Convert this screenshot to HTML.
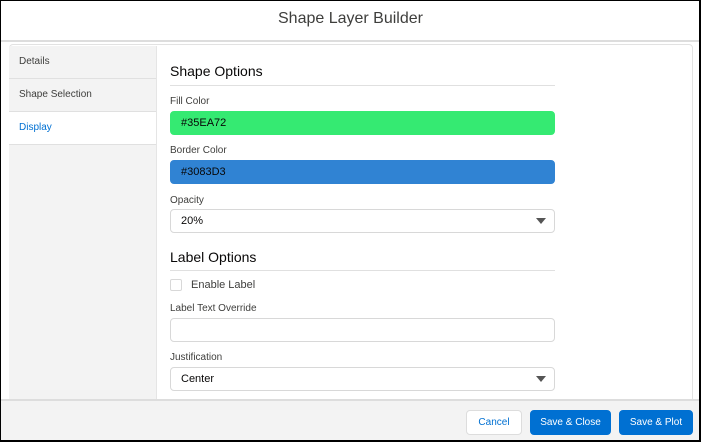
<!DOCTYPE html>
<html><head><meta charset="utf-8"><style>
*{box-sizing:border-box;margin:0;padding:0}
body{width:701px;height:442px;overflow:hidden;font-family:"Liberation Sans",sans-serif;background:#fff;position:relative;color:#3e3e3c}
.frame{position:absolute;left:0;top:0;width:701px;height:442px;border:1px solid #000;border-right-width:2px;border-bottom-width:2px;z-index:10;pointer-events:none}
.hdr{position:absolute;left:0;top:0;width:701px;height:42px;border-bottom:2px solid #ddd;text-align:center;font-size:16px;line-height:38px;color:#3e3e3c}
.panel{position:absolute;left:9px;top:44px;width:684px;height:360px;border:1px solid #e2e2e2;border-radius:4px 4px 0 0;background:#fff}
.nav{position:absolute;left:9px;top:46px;width:148px;height:354px;background:#f3f3f3;border-right:1px solid #e5e5e5}
.nav div{height:33px;line-height:32px;padding-left:10px;font-size:10px;border-bottom:1px solid #e0e0e0;color:#3e3e3c}
.nav .act{background:#fff;color:#0070d2}
.a{position:absolute;font-size:10px}
.h{position:absolute;left:170px;font-size:14px;color:#080707}
.line{position:absolute;left:170px;width:385px;height:1px;background:#e0e0e0}
.inp{position:absolute;left:170px;width:385px;height:24px;border:1px solid #d8d8d8;border-radius:4px;font-size:11px;line-height:22px;padding-left:10px;color:#080707}
.tri{position:absolute;right:8px;top:8px;width:0;height:0;border-left:5px solid transparent;border-right:5px solid transparent;border-top:6px solid #555}
.ftr{position:absolute;left:0;top:399px;width:701px;height:43px;background:#f3f3f3;border-top:2px solid #ddd}
.btn{position:absolute;top:410px;height:25px;border-radius:4px;font-size:10px;line-height:23px;text-align:center;border:1px solid #0070d2;background:#0070d2;color:#fff}
</style></head><body>
<div class="hdr">Shape Layer Builder</div>
<div class="panel"></div>
<div class="nav"><div>Details</div><div>Shape Selection</div><div class="act">Display</div></div>
<div class="h" style="top:63px">Shape Options</div>
<div class="line" style="top:85px"></div>
<div class="a" style="left:170px;top:96px">Fill Color</div>
<div class="inp" style="top:111px;background:#35EA72;border-color:#35EA72">#35EA72</div>
<div class="a" style="left:170px;top:145px">Border Color</div>
<div class="inp" style="top:160px;background:#3083D3;border-color:#3083D3">#3083D3</div>
<div class="a" style="left:170px;top:195px">Opacity</div>
<div class="inp" style="top:209px">20%<span class="tri"></span></div>
<div class="h" style="top:249px">Label Options</div>
<div class="line" style="top:270px"></div>
<div style="position:absolute;left:170px;top:279px;width:12px;height:12px;border:1px solid #d8d8d8;border-radius:2px"></div>
<div class="a" style="left:191px;top:279px;font-size:11px">Enable Label</div>
<div class="a" style="left:170px;top:303px">Label Text Override</div>
<div class="inp" style="top:318px"></div>
<div class="a" style="left:170px;top:352px">Justification</div>
<div class="inp" style="top:367px">Center<span class="tri"></span></div>
<div class="ftr"></div>
<div class="btn" style="left:466px;width:56px;background:#fff;color:#0070d2;border-color:#ddd">Cancel</div>
<div class="btn" style="left:530px;width:81px">Save &amp; Close</div>
<div class="btn" style="left:619px;width:74px">Save &amp; Plot</div>
<div class="frame"></div>
</body></html>
